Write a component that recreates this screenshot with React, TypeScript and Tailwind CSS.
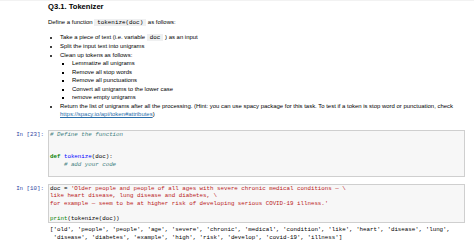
const mono = "font-['Liberation_Mono',monospace]";

function Prompt({ n }: { n: number }) {
  return (
    <div className={`w-[48px] shrink-0 pr-[4px] text-right text-[#303f9f] ${mono} text-[5.8px] leading-[7.5px] pt-[1px]`}>
      In [{n}]:
    </div>
  );
}

function Code({ children }: { children: React.ReactNode }) {
  return (
    <pre className={`w-[417px] border border-[#cfcfcf] bg-[#f7f7f7] px-[1px] ${mono} text-[5.8px] leading-[7.5px] text-black whitespace-pre`}>
      {children}
    </pre>
  );
}

function Tick({ children }: { children: React.ReactNode }) {
  return <code className={`bg-[#eff0f1] px-[3px] ${mono} text-[5.9px]`}>{children}</code>;
}

export default function App() {
  return (
    <div className="w-[474px] h-[250px] overflow-hidden bg-white border-t border-[#f2f2f2] font-['Liberation_Sans',Arial,sans-serif] text-black">
      <div className="pl-[48px] pt-[1px]">
        <h3 className="text-[7.6px] leading-[9px] font-bold">Q3.1. Tokenizer</h3>
        <p className="mt-[7px] text-[5.95px] leading-[8.5px]">
          Define a function <Tick>tokenize(doc)</Tick> as follows:
        </p>
        <ul className="mt-[5px] list-disc pl-[12px] text-[5.95px] leading-[8.5px]">
          <li>
            Take a piece of text (i.e. variable <Tick>doc</Tick> ) as an input
          </li>
          <li>Split the input text into unigrams</li>
          <li>
            Clean up tokens as follows:
            <ul className="list-[square] pl-[12px]">
              <li>Lemmatize all unigrams</li>
              <li>Remove all stop words</li>
              <li>Remove all punctuations</li>
              <li>Convert all unigrams to the lower case</li>
              <li>remove empty unigrams</li>
            </ul>
          </li>
          <li>
            Return the list of unigrams after all the processing. (Hint: you can use spacy package for this task. To test if a token is stop word or punctuation, check{" "}
            <a className="text-[#296eaa] underline">https://spacy.io/api/token#attributes</a>)
          </li>
        </ul>
      </div>

      <div className="mt-[11px] flex">
        <Prompt n={23} />
        <Code>
          <span className="italic text-[#408080]"># Define the function</span>
          {"\n\n\n"}
          <span className="font-bold text-[#008000]">def</span> <span className="text-[#0000ff]">tokenize</span>(doc):{"\n"}
          {"    "}
          <span className="italic text-[#408080]"># add your code</span>
          {"\n "}
        </Code>
      </div>

      <div className="mt-[7px] flex">
        <Prompt n={10} />
        <Code>
          {"doc = "}
          <span className="text-[#ba2121]">
            {"'Older people and people of all ages with severe chronic medical conditions — \\\nlike heart disease, lung disease and diabetes, \\\nfor example — seem to be at higher risk of developing serious COVID-19 illness.'"}
          </span>
          {"\n\n"}
          <span className="text-[#008000]">print</span>(tokenize(doc))
        </Code>
      </div>

      <div className="mt-[3px] flex">
        <div className="w-[48px] shrink-0" />
        <pre className={`pl-[2px] ${mono} text-[5.8px] leading-[7.5px] whitespace-pre`}>
          {"['old', 'people', 'people', 'age', 'severe', 'chronic', 'medical', 'condition', 'like', 'heart', 'disease', 'lung',\n 'disease', 'diabetes', 'example', 'high', 'risk', 'develop', 'covid-19', 'illness']"}
        </pre>
      </div>
    </div>
  );
}
